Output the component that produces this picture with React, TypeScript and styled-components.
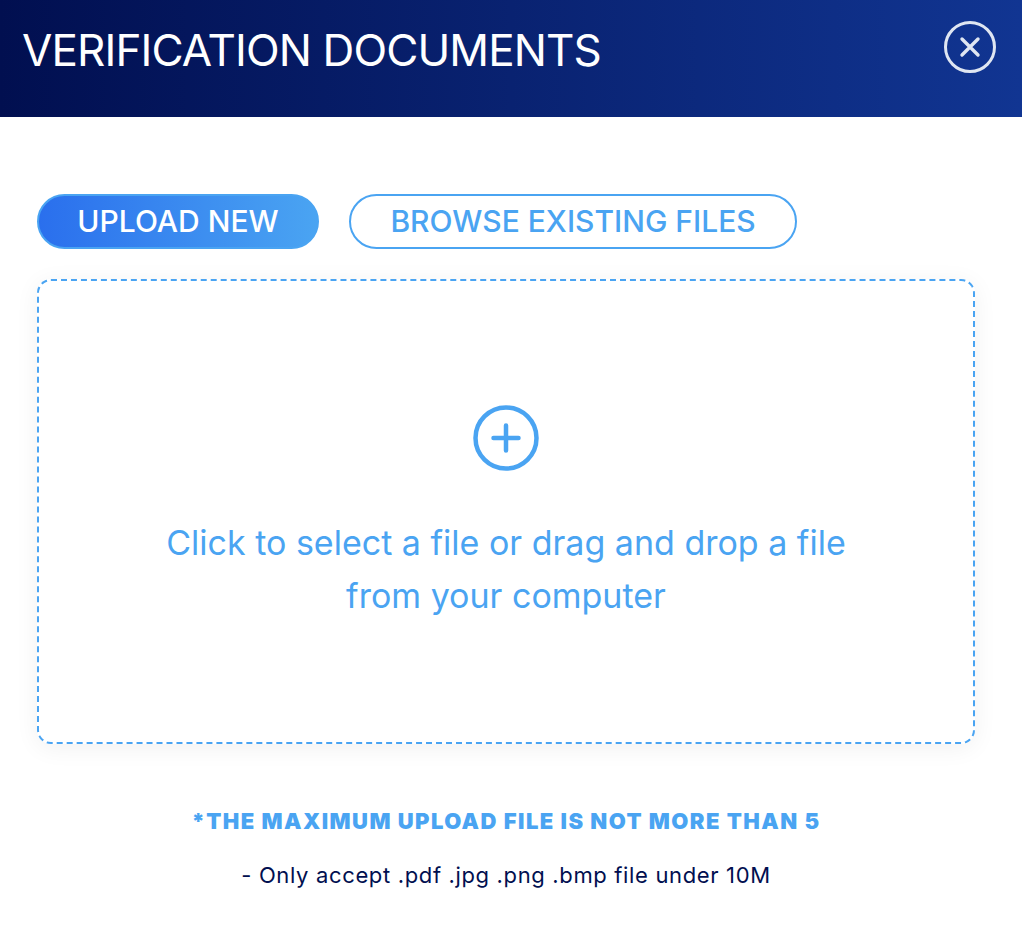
import styled, { createGlobalStyle } from "styled-components"

const GlobalStyle = createGlobalStyle`
    html, body {
        margin: 0;
        padding: 0;
        background: #fff;
        font-family: Inter, "Liberation Sans", sans-serif;
    }
`

const Page = styled.div`
    width: 1022px;
    height: 944px;
    overflow: hidden;
    background: #fff;
`

const Header = styled.header`
    height: 117px;
    display: flex;
    justify-content: space-between;
    align-items: flex-start;
    padding: 25px 26px 0 22px;
    box-sizing: border-box;
    background: linear-gradient(90deg, #010f50 0%, #113592 100%);
`

const Title = styled.h1`
    margin: 0;
    font-size: 44px;
    line-height: 50px;
    font-weight: 400;
    color: #fff;
    letter-spacing: -0.88px;
`

const CloseButton = styled.button`
    width: 52px;
    height: 52px;
    margin-top: -4px;
    padding: 0;
    border: 0;
    background: none;
    display: block;
`

const Content = styled.main`
    padding: 77px 47px 0 37px;
`

const Tabs = styled.div`
    display: flex;
    gap: 30px;
`

const Tab = styled.button<{ $active?: boolean }>`
    height: 55px;
    box-sizing: border-box;
    padding: 0 0 2px;
    width: ${(p) => (p.$active ? "282px" : "448px")};
    border-radius: 28px;
    border: 2px solid #4aa4f2;
    font-family: inherit;
    font-size: 30px;
    font-weight: 500;
    color: ${(p) => (p.$active ? "#fff" : "#4aa4f2")};
    background: ${(p) => (p.$active ? "linear-gradient(90deg, #2a6fed 0%, #4aa4f2 100%)" : "#fff")};
`

const DropZone = styled.div`
    margin-top: 30px;
    height: 465px;
    box-sizing: border-box;
    border: 2px dashed #4aa4f2;
    border-radius: 14px;
    box-shadow: 0 4px 24px rgba(0, 0, 0, 0.06);
    display: flex;
    flex-direction: column;
    align-items: center;
    padding-top: 124px;
`

const DropText = styled.p`
    margin: 45px 0 0;
    width: 720px;
    text-align: center;
    font-size: 34px;
    line-height: 53px;
    color: #4aa4f2;
`

const Notes = styled.div`
    margin-top: 62px;
    text-align: center;
`

const Limit = styled.div`
    font-size: 22px;
    line-height: 30px;
    font-weight: 900;
    letter-spacing: 1.45px;
    color: #4aa4f2;
`

const Hint = styled.div`
    margin-top: 24px;
    font-size: 22px;
    line-height: 30px;
    letter-spacing: 0.65px;
    color: #010f50;
`

function App() {
    return (
        <Page>
            <GlobalStyle />
            <Header>
                <Title>VERIFICATION DOCUMENTS</Title>
                <CloseButton aria-label="close">
                    <svg width="52" height="52" viewBox="0 0 52 52" fill="none" stroke="#dfe6f2">
                        <circle cx="26" cy="26" r="24.5" strokeWidth="3" />
                        <path d="M18 18L34 34M34 18L18 34" strokeWidth="3.4" strokeLinecap="round" />
                    </svg>
                </CloseButton>
            </Header>
            <Content>
                <Tabs>
                    <Tab $active>UPLOAD NEW</Tab>
                    <Tab>BROWSE EXISTING FILES</Tab>
                </Tabs>
                <DropZone>
                    <svg width="66" height="66" viewBox="0 0 66 66" fill="none" stroke="#4aa4f2">
                        <circle cx="33" cy="33" r="30.5" strokeWidth="4.5" />
                        <path d="M33 20.5V45.5M20.5 33H45.5" strokeWidth="4.5" strokeLinecap="round" />
                    </svg>
                    <DropText>Click to select a file or drag and drop a file from your computer</DropText>
                </DropZone>
                <Notes>
                    <Limit>*THE MAXIMUM UPLOAD FILE IS NOT MORE THAN 5</Limit>
                    <Hint>- Only accept .pdf .jpg .png .bmp file under 10M</Hint>
                </Notes>
            </Content>
        </Page>
    )
}

export default App
